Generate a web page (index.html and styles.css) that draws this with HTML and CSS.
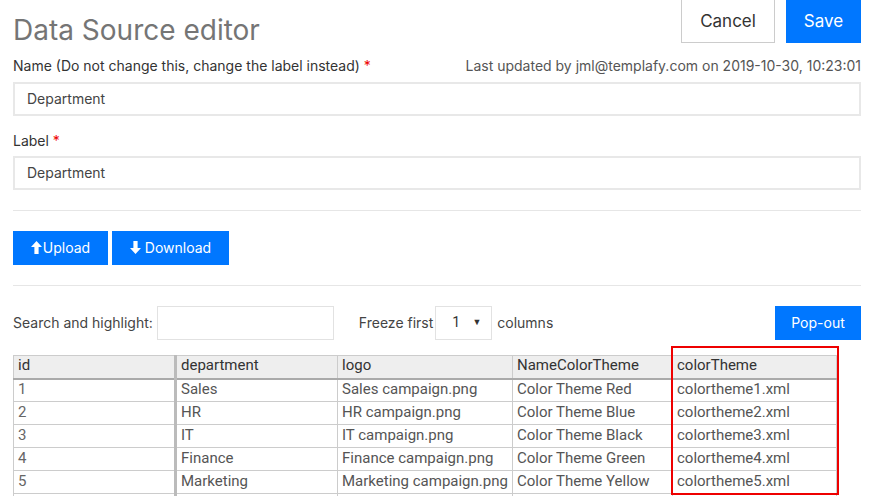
FILE: index.html
```html
<!DOCTYPE html>
<html>
<head>
<meta charset="utf-8">
<link rel="stylesheet" href="styles.css">
</head>
<body>
<div class="page">
  <div class="head">
    <h1 class="title">Data Source editor</h1>
    <div class="actions">
      <button class="btn btn-default">Cancel</button>
      <button class="btn btn-primary btn-save">Save</button>
    </div>
  </div>

  <div class="label-row">
    <label class="lbl">Name (Do not change this, change the label instead) <span class="req">*</span></label>
    <span class="updated">Last updated by jml@templafy.com on 2019-10-30, 10:23:01</span>
  </div>
  <div class="field">Department</div>

  <div class="label-row label-row-2">
    <label class="lbl">Label <span class="req">*</span></label>
  </div>
  <div class="field">Department</div>

  <hr class="sep sep-1">

  <div class="io">
    <button class="btn btn-primary btn-io"><svg class="ico" viewBox="0 0 12 14" width="11" height="13"><path d="M6 0 L12 6.5 H8.3 V14 H3.7 V6.5 H0 Z" fill="#fff"/></svg>Upload</button>
    <button class="btn btn-primary btn-io btn-dl"><svg class="ico" viewBox="0 0 12 14" width="11" height="13"><path d="M6 14 L12 7.5 H8.3 V0 H3.7 V7.5 H0 Z" fill="#fff"/></svg> Download</button>
  </div>

  <hr class="sep sep-2">

  <div class="tools">
    <span class="tool-lbl">Search and highlight:</span>
    <div class="search"></div>
    <span class="tool-lbl freeze">Freeze first</span>
    <div class="select"><span>1</span><span class="caret">&#9660;</span></div>
    <span class="tool-lbl">columns</span>
    <button class="btn btn-primary btn-pop">Pop-out</button>
  </div>

  <div class="grid-wrap">
    <table class="grid">
      <colgroup>
        <col class="c1"><col class="c2"><col class="c3"><col class="c4"><col class="c5">
      </colgroup>
      <thead>
        <tr><th class="frozen">id</th><th>department</th><th>logo</th><th>NameColorTheme</th><th>colorTheme</th></tr>
      </thead>
      <tbody>
        <tr><td class="frozen">1</td><td>Sales</td><td>Sales campaign.png</td><td>Color Theme Red</td><td>colortheme1.xml</td></tr>
        <tr><td class="frozen">2</td><td>HR</td><td>HR campaign.png</td><td>Color Theme Blue</td><td>colortheme2.xml</td></tr>
        <tr><td class="frozen">3</td><td>IT</td><td>IT campaign.png</td><td>Color Theme Black</td><td>colortheme3.xml</td></tr>
        <tr><td class="frozen">4</td><td>Finance</td><td>Finance campaign.png</td><td>Color Theme Green</td><td>colortheme4.xml</td></tr>
        <tr><td class="frozen">5</td><td>Marketing</td><td>Marketing campaign.png</td><td>Color Theme Yellow</td><td>colortheme5.xml</td></tr>
        <tr><td class="frozen">&nbsp;</td><td></td><td></td><td></td><td></td></tr>
      </tbody>
    </table>
    <div class="highlight"></div>
  </div>
</div>
</body>
</html>
```

FILE: styles.css
```css
html, body {
  margin: 0;
  padding: 0;
  background: #fff;
  overflow: hidden;
}
body {
  font-family: Inter, "Noto Sans", sans-serif;
  color: #333;
  font-size: 14px;
}
.page {
  padding: 0 18px 0 13px;
  width: 848px;
}
.head {
  display: flex;
  justify-content: space-between;
  align-items: flex-start;
  height: 42px;
}
.title {
  margin: 13px 0 0 0;
  font-family: Inter, sans-serif;
  font-weight: 400;
  font-size: 28px;
  line-height: 34px;
  color: #757575;
  letter-spacing: 0;
}
.actions {
  display: flex;
  gap: 11px;
  margin-top: -1px;
}
.btn {
  font-family: Inter, sans-serif;
  border: 1px solid transparent;
  border-radius: 0;
  padding: 0;
  cursor: pointer;
  display: inline-flex;
  align-items: center;
  justify-content: center;
}
.btn-default {
  background: #fff;
  border-color: #ccc;
  color: #333;
  width: 94px;
  height: 44px;
  font-size: 17px;
}
.btn-primary {
  background: #0077ff;
  border-color: #0077ff;
  color: #fff;
}
.btn-save {
  width: 75px;
  height: 44px;
  font-size: 17px;
}
.label-row {
  display: flex;
  justify-content: space-between;
  align-items: center;
  margin-top: 13px;
  height: 20px;
  margin-bottom: 7px;
}
.label-row-2 {
  margin-top: 14px;
  margin-bottom: 6px;
}
.lbl {
  font-size: 14px;
  color: #333;
}
.req {
  color: #e00;
}
.updated {
  font-size: 14px;
  color: #555;
}
.field {
  height: 34px;
  box-sizing: border-box;
  border: 2px solid #e8e8e8;
  padding: 0 12px 2px;
  display: flex;
  align-items: center;
  font-size: 14px;
  color: #444;
}
.sep {
  border: 0;
  border-top: 1px solid #e6e6e6;
  margin: 0;
}
.sep-1 {
  margin-top: 20px;
}
.sep-2 {
  margin-top: 20px;
}
.io {
  display: flex;
  gap: 4px;
  margin-top: 20px;
}
.btn-io {
  height: 34px;
  font-size: 14px;
  gap: 1px;
  padding-bottom: 2px;
}
.btn-io:first-child {
  width: 95px;
}
.btn-dl {
  width: 117px;
  gap: 4px;
}
.ico {
  display: block;
}
.tools {
  display: flex;
  align-items: center;
  margin-top: 20px;
  height: 34px;
}
.tool-lbl {
  font-size: 14px;
  color: #444;
  padding-bottom: 2px;
}
.search {
  width: 177px;
  height: 34px;
  box-sizing: border-box;
  border: 1px solid #e2e2e2;
  margin-left: 4px;
}
.freeze {
  margin-left: 25px;
}
.select {
  width: 57px;
  height: 34px;
  box-sizing: border-box;
  border: 1px solid #e2e2e2;
  margin: 0 5px 0 2px;
  display: flex;
  align-items: center;
  justify-content: space-between;
  padding: 0 10px 2px 16px;
  font-family: Roboto, sans-serif;
  font-size: 14px;
  color: #333;
}
.caret {
  font-size: 9px;
  color: #333;
}
.btn-pop {
  margin-left: auto;
  width: 86px;
  height: 34px;
  font-size: 14px;
  padding-bottom: 2px;
}
.grid-wrap {
  position: relative;
  margin-top: 15px;
}
.grid {
  border-collapse: collapse;
  table-layout: fixed;
  width: 823px;
  font-family: Roboto, sans-serif;
  font-size: 15px;
}
.c1 { width: 162px; }
.c2 { width: 162px; }
.c3 { width: 175px; }
.c4 { width: 160px; }
.c5 { width: 164px; }
.grid tr {
  height: 23px;
}
.grid th, .grid td {
  border: 1px solid #ccc;
  padding: 0 4px 2px;
  text-align: left;
  white-space: nowrap;
  overflow: hidden;
  line-height: 19px;
}
.grid th {
  background: #eee;
  font-weight: 400;
  color: #333;
  border-bottom: 2px solid #aaa;
  box-shadow: 0 2px 2px rgba(0,0,0,0.15);
}
.grid td {
  color: #555;
}
.grid .frozen {
  border-right: 3px solid #bbb;
  color: #666;
}
.grid th.frozen {
  color: #333;
}
.highlight {
  position: absolute;
  left: 658px;
  top: -9px;
  width: 164px;
  height: 145px;
  border: 2px solid #ee0000;
  pointer-events: none;
}
```
